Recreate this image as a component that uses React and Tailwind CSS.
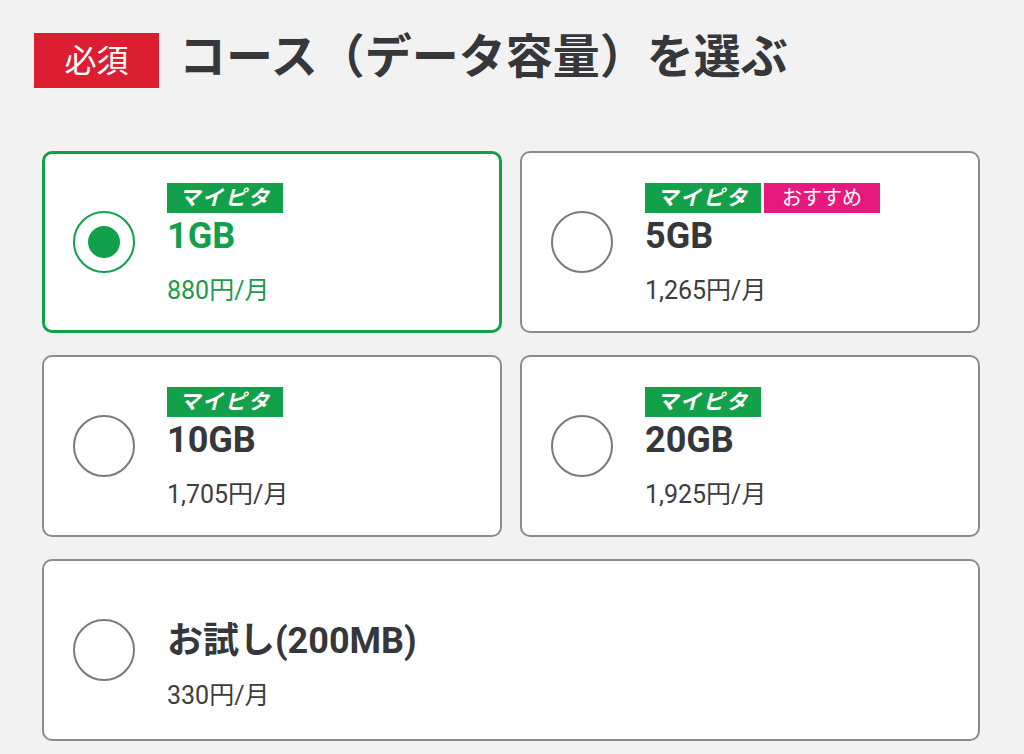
const plans = [
  { id: "1gb", name: "1GB", price: "880円/月", mypita: true, selected: true },
  { id: "5gb", name: "5GB", price: "1,265円/月", mypita: true, recommend: true },
  { id: "10gb", name: "10GB", price: "1,705円/月", mypita: true },
  { id: "20gb", name: "20GB", price: "1,925円/月", mypita: true },
];

function Radio({ checked }) {
  return (
    <span
      className={
        "flex h-[62px] w-[62px] shrink-0 items-center justify-center rounded-full border-2 bg-white " +
        (checked ? "border-[#13a04a]" : "border-[#7a7a7a]")
      }
    >
      {checked && <span className="h-[32px] w-[32px] rounded-full bg-[#13a04a]" />}
    </span>
  );
}

function Tag({ children, color }) {
  return (
    <span
      className={
        "flex h-[30px] w-[116px] items-center justify-center text-white " + color
      }
    >
      {children}
    </span>
  );
}

function PlanCard({ plan }) {
  const on = plan.selected;
  return (
    <label
      className={
        "flex h-[182px] items-center rounded-[10px] bg-white " +
        (on ? "border-[3px] border-[#13a04a] pl-[28px]" : "border-2 border-[#8c8c8c] pl-[29px]")
      }
    >
      <Radio checked={on} />
      <div className={"ml-[32px] self-start " + (on ? "mt-[29px]" : "mt-[30px]")}>
        <div className="flex gap-[3px]">
          {plan.mypita && (
            <Tag color="bg-[#12a04a]">
              <span className="text-[21px] font-bold italic leading-none tracking-[2px]">マイピタ</span>
            </Tag>
          )}
          {plan.recommend && (
            <Tag color="bg-[#e5197e]">
              <span className="text-[20px] leading-none">おすすめ</span>
            </Tag>
          )}
        </div>
        <p
          className={
            "mt-[3px] text-[36px] font-bold leading-[40px] " +
            (on ? "text-[#13a04a]" : "text-[#35373b]")
          }
        >
          {plan.name}
        </p>
        <p
          className={
            "mt-[19px] text-[25px] leading-[32px] " +
            (on ? "text-[#1c9a4c]" : "text-[#3d3d3d]")
          }
        >
          {plan.price}
        </p>
      </div>
    </label>
  );
}

export default function App() {
  return (
    <div className="h-[754px] w-full overflow-hidden bg-[#f2f2f2] font-['Roboto','Noto_Sans_CJK_JP',sans-serif]">
      <div className="ml-[34px] flex items-center pt-[33px]">
        <span className="flex h-[55px] w-[125px] items-center justify-center bg-[#dc1e32] text-[32px] leading-none text-white">
          必須
        </span>
        <h1 className="ml-[20px] pb-[8px] text-[47px] font-bold leading-none text-[#35373b]">
          コース（データ容量）を選ぶ
        </h1>
      </div>

      <div className="ml-[42px] mt-[63px] w-[938px]">
        <div className="grid grid-cols-2 gap-x-[18px] gap-y-[22px]">
          {plans.map((p) => (
            <PlanCard key={p.id} plan={p} />
          ))}
        </div>

        <label className="mt-[22px] flex h-[182px] items-center rounded-[10px] border-2 border-[#8c8c8c] bg-white pl-[29px]">
          <Radio />
          <div className="ml-[32px] self-start mt-[60px]">
            <p className="text-[36px] font-bold leading-[40px] text-[#35373b]">お試し(200MB)</p>
            <p className="mt-[19px] text-[25px] leading-[32px] text-[#3d3d3d]">330円/月</p>
          </div>
        </label>
      </div>
    </div>
  );
}
